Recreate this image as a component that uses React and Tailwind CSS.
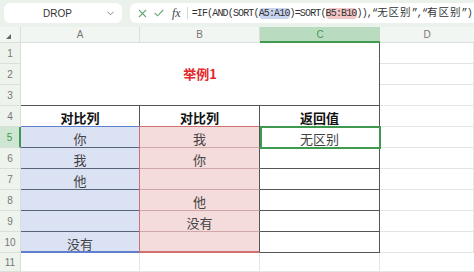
import React from 'react';

const cjk = "font-['Noto_Sans_CJK_SC',sans-serif]";

const rows = {
  4: ['对比列', '对比列', '返回值'],
  5: ['你', '我', '无区别'],
  6: ['我', '你', ''],
  7: ['他', '', ''],
  8: ['', '他', ''],
  9: ['', '没有', ''],
  10: ['没有', '', ''],
};

const fillA = 'bg-[#dbe2f4]';
const fillB = 'bg-[#f4dcdc]';

const RowNum = ({ n, active }) => (
  <div
    className={
      active
        ? "flex items-center justify-center border-b border-r-2 border-b-[#d9e0d9] border-r-[#3f9a50] bg-[#cfe6d3] text-[10px] text-[#3f9a50] font-['Liberation_Sans',sans-serif]"
        : "flex items-center justify-center border-b border-r border-[#d9e0d9] bg-[#eef3ee] text-[10px] text-[#777] font-['Liberation_Sans',sans-serif]"
    }
  >
    {n}
  </div>
);

const Blank = () => <div className="border-b border-r border-[#e2e6e2] bg-white" />;

const Zh = ({ children }) => <span className="tracking-[1px] text-[10.5px]">{children}</span>;

export default function App() {
  return (
    <div className="w-[474px] h-[272px] overflow-hidden bg-white">
      {/* name box + formula bar */}
      <div className="h-[27px] bg-[#ebf1eb] flex items-start pt-[3px] pl-1 gap-2">
        <div className="w-[118px] h-[20px] bg-white rounded-md flex items-center pr-2">
          <span className="flex-1 text-center text-[10px] text-[#333] font-['Liberation_Sans',sans-serif] pl-1">DROP</span>
          <svg width="7" height="5" viewBox="0 0 7 5" fill="none" stroke="#888" strokeWidth="1">
            <path d="M0.5 0.8 L3.5 3.8 L6.5 0.8" />
          </svg>
        </div>
        <div className="flex-1 h-[20px] bg-white rounded-l-md flex items-center pl-[8px] whitespace-nowrap overflow-hidden">
          <svg width="9" height="9" viewBox="0 0 9 9" stroke="#6aa878" strokeWidth="1.1">
            <path d="M1 1 L8 8 M8 1 L1 8" />
          </svg>
          <svg className="ml-[7px]" width="10" height="8" viewBox="0 0 10 8" fill="none" stroke="#6aa878" strokeWidth="1.1">
            <path d="M0.8 4 L3.6 6.8 L9.2 1" />
          </svg>
          <span className="ml-[8px] text-[12px] italic text-[#444] font-['Liberation_Serif',serif] leading-none">fx</span>
          <div className="ml-[6px] w-px h-[12px] bg-[#d4d8d4]" />
          <span className="ml-[4px] text-[10px] tracking-[-0.85px] text-[#333] font-['Liberation_Mono','Noto_Sans_CJK_SC',monospace] leading-none">
            =IF(AND(SORT(<span className="bg-[#c8d4f0] rounded-sm">A5:A10</span>)=SORT(<span className="bg-[#f2c6c6] rounded-sm">B5:B10</span>)),“<Zh>无区别</Zh>”,“<Zh>有区别</Zh>”)
          </span>
        </div>
      </div>

      {/* sheet */}
      <div className="relative grid grid-cols-[21px_119px_120px_120px_1fr] grid-rows-[16px_repeat(10,21px)_1fr] h-[245px] bg-white">
        {/* column headers */}
        <div className="relative border-b border-r border-[#d9e0d9] bg-[#f2f6f2]">
          <svg className="absolute left-[6px] top-[7px]" width="5" height="5" viewBox="0 0 5 5">
            <path d="M5 0 L5 5 L0 5 Z" fill="#666" />
          </svg>
        </div>
        {['A', 'B'].map((c) => (
          <div key={c} className="flex items-center justify-center border-b border-r border-[#d9e0d9] bg-[#f2f6f2] text-[10px] text-[#777] font-['Liberation_Sans',sans-serif]">
            {c}
          </div>
        ))}
        <div className="flex items-center justify-center border-b-2 border-[#3f9a50] bg-[#b9dcc0] text-[10px] text-[#3f9a50] font-['Liberation_Sans',sans-serif]">
          C
        </div>
        <div className="flex items-center justify-center border-b border-[#d9e0d9] bg-[#f2f6f2] text-[10px] text-[#777] font-['Liberation_Sans',sans-serif]">
          D
        </div>

        {/* rows 1-3, A1:C3 merged */}
        <RowNum n={1} />
        <div className="col-span-3 row-span-3 flex items-center justify-center border-b border-r border-[#555] bg-white">
          <span className={cjk + ' text-[13px] font-bold text-[#e3262a]'}>举例1</span>
        </div>
        <Blank />
        <RowNum n={2} />
        <Blank />
        <RowNum n={3} />
        <Blank />

        {/* rows 4-10 */}
        {[4, 5, 6, 7, 8, 9, 10].map((r) => (
          <React.Fragment key={r}>
            <RowNum n={r} active={r === 5} />
            {rows[r].map((t, i) => (
              <div
                key={i}
                className={
                  'flex items-center justify-center pt-[2px] border-b border-r ' +
                  (r === 4
                    ? 'border-[#555] bg-white font-bold text-[#111]'
                    : i === 0
                    ? 'border-[#59627a] text-[#444] ' + fillA
                    : i === 1
                    ? 'border-b-[#cfa7a7] border-r-[#555] text-[#444] ' + fillB
                    : 'border-[#555] bg-white text-[#444]')
                }
              >
                <span className={cjk + ' text-[13px] leading-none'}>{t}</span>
              </div>
            ))}
            <Blank />
          </React.Fragment>
        ))}

        {/* row 11 */}
        <RowNum n={11} />
        <Blank />
        <Blank />
        <Blank />
        <div className="border-b border-[#e2e6e2]" />

        {/* range highlights */}
        <div className="absolute left-[21px] top-[99px] w-[119px] h-[127px] border-t border-b-2 border-[#5f7fcc] pointer-events-none" />
        <div className="absolute left-[139px] top-[99px] w-[120px] h-[127px] border-l border-t border-b-2 border-[#d07070] pointer-events-none" />
        <div className="absolute left-[260px] top-[99px] w-[121px] h-[23px] border-2 border-[#3f9a50] pointer-events-none" />
      </div>
    </div>
  );
}
